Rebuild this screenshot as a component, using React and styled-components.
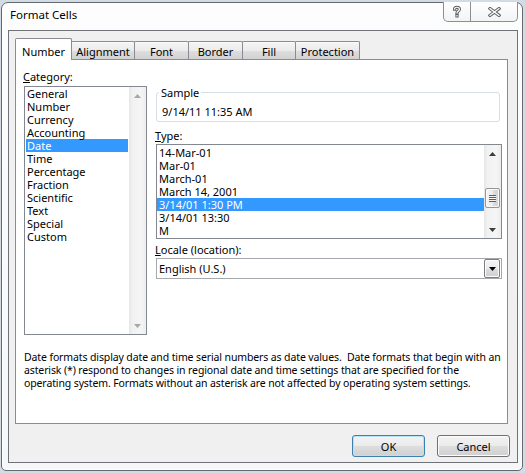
import React from 'react';
import styled, { createGlobalStyle } from 'styled-components';

const Global = createGlobalStyle`
  html, body { margin: 0; padding: 0; }
  body {
    background: #d3dbe4;
    font-family: "Noto Sans", "Open Sans", sans-serif;
    font-size: 11px;
    color: #000;
  }
  * { box-sizing: border-box; }
`;

const Desktop = styled.div`
  width: 525px;
  height: 473px;
  padding: 2px 0 0 1px;
  overflow: hidden;
`;

const Window = styled.div`
  width: 522px;
  height: 469px;
  border: 1px solid #63686e;
  border-radius: 7px 7px 5px 5px;
  background: linear-gradient(#fdfdfe, #f6f7f9);
  box-shadow: inset 0 0 0 1px #ffffff;
  display: flex;
  flex-direction: column;
`;

const TitleBar = styled.div`
  height: 27px;
  flex: none;
  display: flex;
  justify-content: space-between;
  align-items: flex-start;
`;

const Title = styled.div`
  margin: 5px 0 0 8px;
  font-size: 11.5px;
  line-height: 14px;
`;

const CaptionGroup = styled.div`
  display: flex;
  margin: -1px 4px 0 0;
  border: 1px solid #8a8f95;
  border-top: none;
  border-radius: 0 0 5px 5px;
  overflow: hidden;
  background: linear-gradient(#ffffff, #f1f3f5);
`;

const CaptionButton = styled.div`
  width: ${p => p.$w}px;
  height: 19px;
  display: flex;
  align-items: center;
  justify-content: center;
  border-left: ${p => (p.$divider ? '1px solid #8a8f95' : 'none')};
`;

const Client = styled.div`
  flex: 1;
  margin: 0 4px 7px 6px;
  border: 1px solid #6f7378;
  background: #f0f0f0;
  padding: 7px 9px 0 6px;
  display: flex;
  flex-direction: column;
`;

const TabStrip = styled.div`
  height: 22px;
  flex: none;
  display: flex;
  align-items: flex-end;
  margin-bottom: -1px;
  position: relative;
  z-index: 1;
`;

const Tab = styled.div`
  width: ${p => p.$w}px;
  height: ${p => (p.$active ? 22 : 18)}px;
  margin-left: ${p => (p.$first ? 0 : -1)}px;
  margin-bottom: ${p => (p.$active ? 0 : 1)}px;
  border: 1px solid #898c95;
  border-bottom: none;
  border-radius: 2px 2px 0 0;
  background: ${p =>
    p.$active
      ? '#ffffff'
      : 'linear-gradient(#f5f5f5 0%, #ebebeb 50%, #dedede 52%, #d2d2d2 100%)'};
  box-shadow: ${p => (p.$active ? 'none' : 'inset 0 1px 0 #fcfcfc')};
  position: relative;
  z-index: ${p => (p.$active ? 2 : 1)};
  display: flex;
  align-items: center;
  justify-content: center;
  padding-top: ${p => (p.$active ? 3 : 1)}px;
  line-height: 13px;
  white-space: nowrap;
`;

const Panel = styled.div`
  height: 365px;
  flex: none;
  border: 1px solid #898c95;
  background: #ffffff;
  padding: 10px 5px 0 8px;
  display: flex;
  flex-direction: column;
`;

const Columns = styled.div`
  display: grid;
  grid-template-columns: 123px 346px;
  column-gap: 9px;
  align-items: start;
`;

const Column = styled.div`
  display: flex;
  flex-direction: column;
  margin-top: ${p => p.$top || 0}px;
`;

const Label = styled.div`
  line-height: 13px;
  height: 13px;
  margin: ${p => p.$m || '0'};
  white-space: nowrap;
  u { text-decoration: underline; text-underline-offset: 1px; }
`;

const ListBox = styled.div`
  height: ${p => p.$h}px;
  border: 1px solid #828790;
  background: #ffffff;
  display: flex;
  overflow: hidden;
`;

const Items = styled.div`
  flex: 1;
  padding: ${p => p.$pad};
  overflow: hidden;
`;

const Item = styled.div`
  height: 13px;
  line-height: 13px;
  padding-left: ${p => p.$indent}px;
  white-space: nowrap;
  background: ${p => (p.$selected ? '#3399ff' : 'transparent')};
  color: ${p => (p.$selected ? '#ffffff' : '#000000')};
`;

const ScrollBar = styled.div`
  width: 17px;
  flex: none;
  display: flex;
  flex-direction: column;
  background: linear-gradient(90deg, #e6e6e6 0%, #f1f1f1 20%, #f5f5f5 70%, #ededed 100%);
`;

const ArrowBox = styled.div`
  height: 17px;
  flex: none;
  display: flex;
  align-items: center;
  justify-content: center;
`;

const Track = styled.div`
  flex: 1;
  display: flex;
  flex-direction: column;
  align-items: center;
`;

const Thumb = styled.div`
  margin-top: ${p => p.$offset}px;
  width: 15px;
  height: 20px;
  border: 1px solid #959595;
  border-radius: 2px;
  background: linear-gradient(90deg, #f4f4f4 0%, #ececec 50%, #dcdcdc 55%, #d2d2d2 100%);
  box-shadow: inset 0 0 0 1px #fafafa;
  display: flex;
  align-items: center;
  justify-content: center;
`;

const Grip = styled.div`
  width: 7px;
  height: 7px;
  background: repeating-linear-gradient(to bottom, #5e5e5e 0 1px, #f4f4f4 1px 2px);
`;

const Group = styled.fieldset`
  margin: 0 2px 0 0;
  padding: 0 6px 0 2px;
  height: 36px;
  min-inline-size: 0;
  border: 1px solid #d5dfe5;
  border-radius: 3px;
`;

const Legend = styled.legend`
  padding: 0 2px;
  line-height: 13px;
`;

const GroupValue = styled.div`
  margin: 6px 0 0 3px;
  line-height: 13px;
`;

const Dropdown = styled.div`
  height: 21px;
  border: 1px solid #a6a8ad;
  background: #ffffff;
  display: flex;
  padding: 0 1px;
`;

const DropText = styled.div`
  flex: 1;
  padding-left: 1px;
  line-height: 19px;
`;

const DropButton = styled.div`
  width: 16px;
  flex: none;
  border: 1px solid #7b7d80;
  border-radius: 2px;
  background: linear-gradient(#f4f4f4 0%, #ebebeb 50%, #dcdcdc 52%, #cfcfcf 100%);
  box-shadow: inset 0 0 0 1px #fbfbfb;
  display: flex;
  align-items: center;
  justify-content: center;
`;

const Description = styled.div`
  margin-top: 16px;
  font-size: 10.5px;
  letter-spacing: -0.12px;
  line-height: 13px;
  white-space: nowrap;
`;

const ButtonRow = styled.div`
  display: flex;
  justify-content: flex-end;
  gap: 12px;
  margin: 11px -2px 0 0;
`;

const Button = styled.div`
  width: 73px;
  height: 22px;
  border-radius: 3px;
  border: 1px solid ${p => (p.$default ? '#3c7fb1' : '#707070')};
  box-shadow: inset 0 0 0 1px ${p => (p.$default ? '#b5e3f8' : '#fcfcfc')};
  background: linear-gradient(#f3f3f3 0%, #ebebeb 48%, #dddddd 52%, #d0d0d0 100%);
  display: flex;
  align-items: center;
  justify-content: center;
  line-height: 13px;
`;

const Arrow = ({ dir, color }) => (
  <svg width="7" height="4" viewBox="0 0 7 4">
    {dir === 'up' ? (
      <polygon points="0,4 3.5,0 7,4" fill={color} />
    ) : (
      <polygon points="0,0 7,0 3.5,4" fill={color} />
    )}
  </svg>
);

const HelpGlyph = () => (
  <svg width="10" height="13" viewBox="0 0 10 13">
    <g fill="none" strokeLinecap="square">
      <path d="M2.6 4.2 C2.6 1.6 7.4 1.6 7.4 4.2 C7.4 6 5 6 5 8" stroke="#5d6166" strokeWidth="3.2" />
      <path d="M5 10.6 L5 10.9" stroke="#5d6166" strokeWidth="3.2" />
      <path d="M2.6 4.2 C2.6 1.6 7.4 1.6 7.4 4.2 C7.4 6 5 6 5 8" stroke="#ffffff" strokeWidth="1.2" />
      <path d="M5 10.6 L5 10.9" stroke="#ffffff" strokeWidth="1.2" />
    </g>
  </svg>
);

const CloseGlyph = () => (
  <svg width="13" height="10" viewBox="0 0 13 10">
    <g fill="none" strokeLinecap="square">
      <path d="M2 1.6 L11 8.4 M11 1.6 L2 8.4" stroke="#5d6166" strokeWidth="3.2" />
      <path d="M2 1.6 L11 8.4 M11 1.6 L2 8.4" stroke="#ffffff" strokeWidth="1.3" />
    </g>
  </svg>
);

const ListScroll = ({ enabled, thumbOffset }) => {
  const color = enabled ? '#3d3d3d' : '#a7a7a7';
  return (
    <ScrollBar>
      <ArrowBox><Arrow dir="up" color={color} /></ArrowBox>
      <Track>
        {enabled && (
          <Thumb $offset={thumbOffset}>
            <Grip />
          </Thumb>
        )}
      </Track>
      <ArrowBox><Arrow dir="down" color={color} /></ArrowBox>
    </ScrollBar>
  );
};

const tabs = [
  { label: 'Number', w: 57, active: true },
  { label: 'Alignment', w: 64 },
  { label: 'Font', w: 55 },
  { label: 'Border', w: 55 },
  { label: 'Fill', w: 54 },
  { label: 'Protection', w: 65 },
];

const categories = [
  'General', 'Number', 'Currency', 'Accounting', 'Date', 'Time',
  'Percentage', 'Fraction', 'Scientific', 'Text', 'Special', 'Custom',
];

const types = [
  '14-Mar-01', 'Mar-01', 'March-01', 'March 14, 2001',
  '3/14/01 1:30 PM', '3/14/01 13:30', 'M',
];

export default function App() {
  return (
    <>
      <Global />
      <Desktop>
        <Window>
          <TitleBar>
            <Title>Format Cells</Title>
            <CaptionGroup>
              <CaptionButton $w={26}><HelpGlyph /></CaptionButton>
              <CaptionButton $w={47} $divider><CloseGlyph /></CaptionButton>
            </CaptionGroup>
          </TitleBar>
          <Client>
            <TabStrip>
              {tabs.map((t, i) => (
                <Tab key={t.label} $w={t.w} $active={t.active} $first={i === 0}>
                  {t.label}
                </Tab>
              ))}
            </TabStrip>
            <Panel>
              <Columns>
                <Column>
                  <Label $m="0 0 3px -1px"><u>C</u>ategory:</Label>
                  <ListBox $h={249}>
                    <Items $pad="0 1px">
                      {categories.map(c => (
                        <Item key={c} $indent={1} $selected={c === 'Date'}>{c}</Item>
                      ))}
                    </Items>
                    <ListScroll enabled={false} />
                  </ListBox>
                </Column>
                <Column $top={16}>
                  <Group>
                    <Legend>Sample</Legend>
                    <GroupValue>9/14/11 11:35 AM</GroupValue>
                  </Group>
                  <Label $m="7px 0 2px -1px"><u>T</u>ype:</Label>
                  <ListBox $h={95}>
                    <Items $pad="1px 0 0 0">
                      {types.map(t => (
                        <Item key={t} $indent={2} $selected={t === '3/14/01 1:30 PM'}>{t}</Item>
                      ))}
                    </Items>
                    <ListScroll enabled thumbOffset={26} />
                  </ListBox>
                  <Label $m="4px 0 2px -1px"><u>L</u>ocale (location):</Label>
                  <Dropdown>
                    <DropText>English (U.S.)</DropText>
                    <DropButton><Arrow dir="down" color="#000000" /></DropButton>
                  </Dropdown>
                </Column>
              </Columns>
              <Description>
                Date formats display date and time serial numbers as date values.{'\u00a0'} Date formats that begin with an
                <br />
                asterisk (*) respond to changes in regional date and time settings that are specified for the
                <br />
                operating system. Formats without an asterisk are not affected by operating system settings.
              </Description>
            </Panel>
            <ButtonRow>
              <Button $default>OK</Button>
              <Button>Cancel</Button>
            </ButtonRow>
          </Client>
        </Window>
      </Desktop>
    </>
  );
}
